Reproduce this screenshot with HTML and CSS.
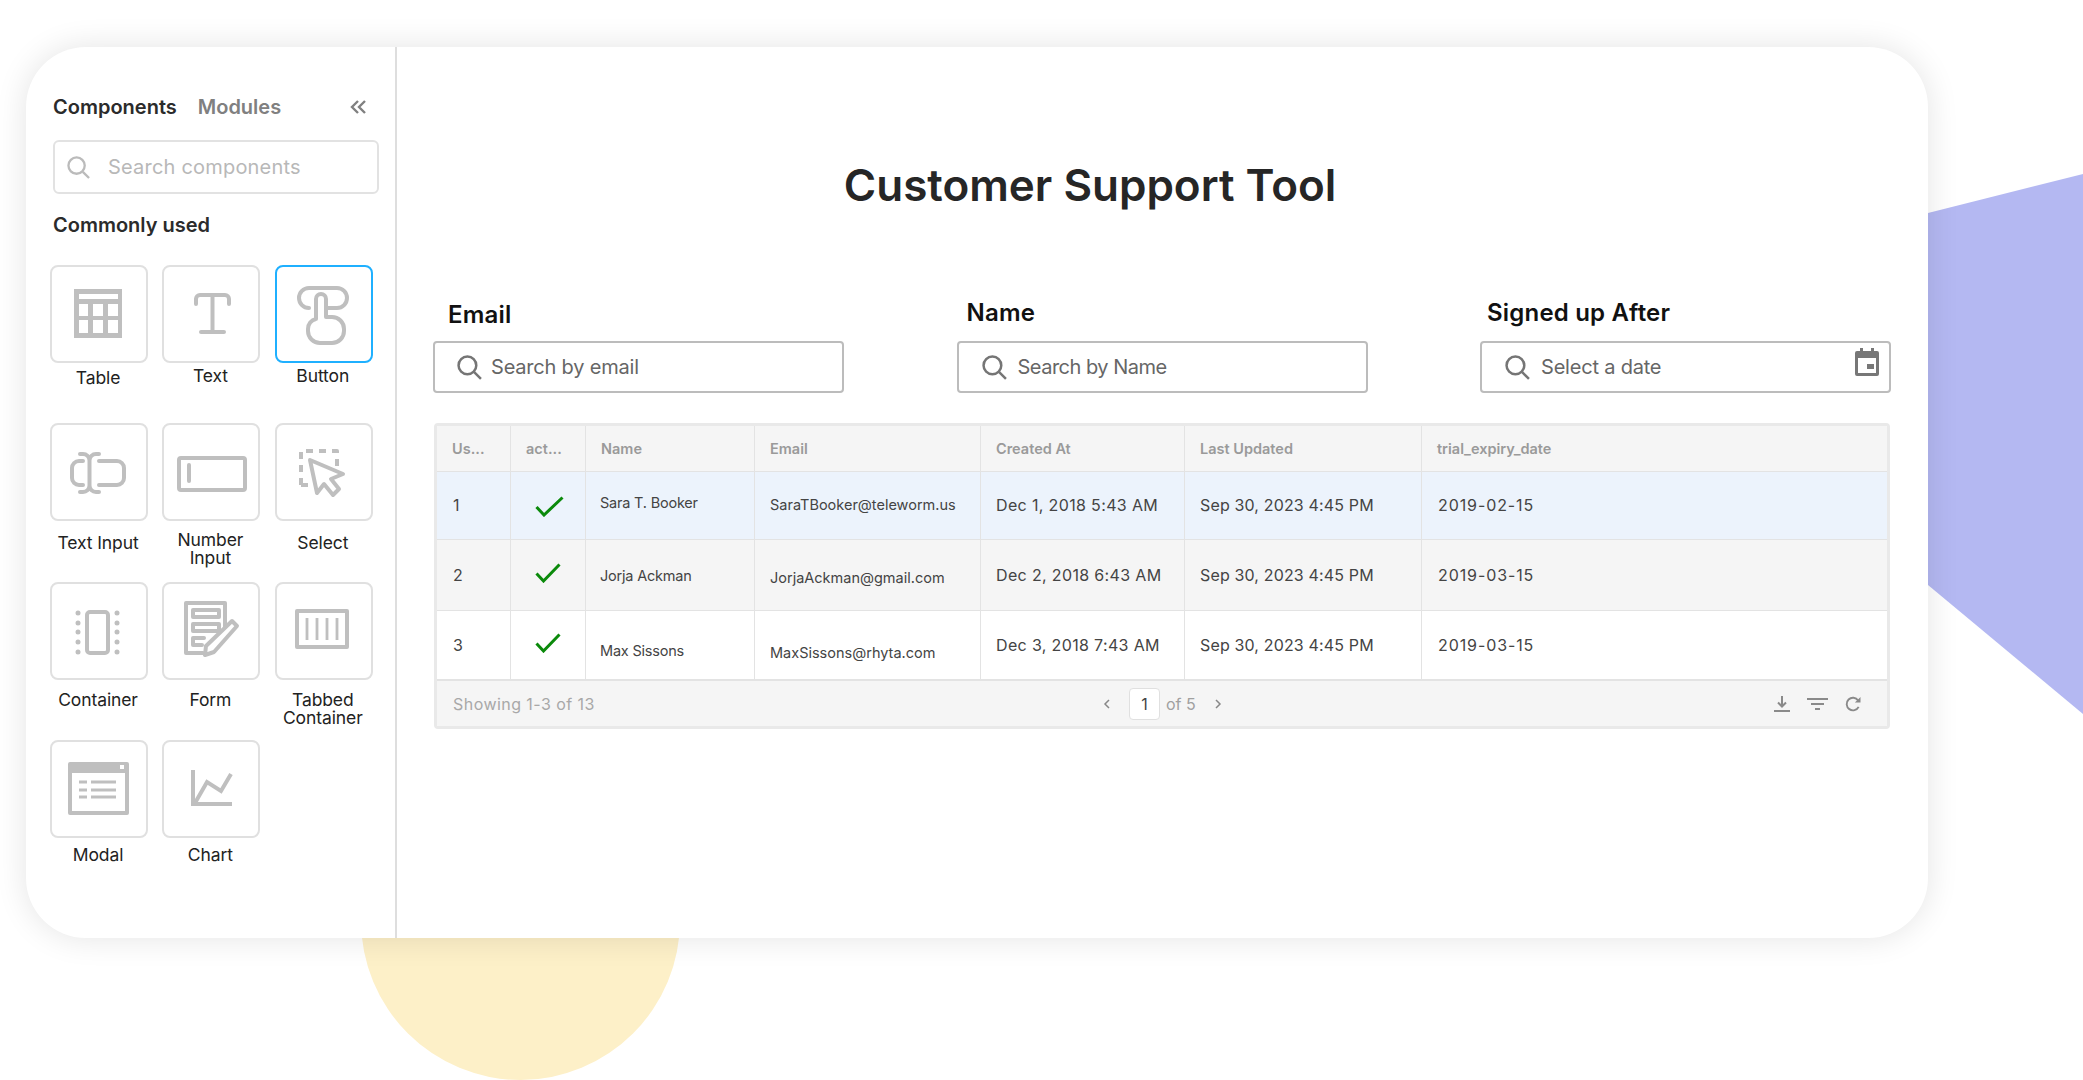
FILE: index.html
```html
<!DOCTYPE html>
<html lang="en">
<head>
    <meta charset="UTF-8">
    <title>Customer Support Tool</title>
    <link rel="stylesheet" href="styles.css">
</head>
<body>
    <div class="page">
        <svg class="deco-wedge" viewBox="0 0 155 540"><polygon points="0,39 155,0 155,540 0,411"/></svg>
        <div class="deco-circle"></div>

        <div class="card">
            <aside class="sidebar">
                <div class="tabs">
                    <span class="tab active">Components</span>
                    <span class="tab">Modules</span>
                    <svg class="collapse" viewBox="0 0 17 14"><path d="M8 1 2 7l6 6M15 1 9 7l6 6"/></svg>
                </div>

                <div class="side-search">
                    <svg class="search-icon" viewBox="0 0 24 24"><circle cx="10" cy="10" r="8.500"/><path d="M16.500 16.500 23 23"/></svg>
                    <span>Search components</span>
                </div>

                <h3 class="side-title">Commonly used</h3>

                <div class="palette">
                    <div class="item">
                        <div class="tile">
                            <svg viewBox="0 0 98 98">
                                <rect class="solid" x="24" y="24" width="48" height="49"/>
                                <g class="hole">
                                    <rect x="29" y="29" width="39" height="5"/>
                                    <rect x="29" y="39" width="9" height="12"/>
                                    <rect x="43" y="39" width="10" height="12"/>
                                    <rect x="58" y="39" width="10" height="12"/>
                                    <rect x="29" y="55" width="9" height="13"/>
                                    <rect x="43" y="55" width="10" height="13"/>
                                    <rect x="58" y="55" width="10" height="13"/>
                                </g>
                            </svg>
                        </div>
                        <div class="item-label low">Table</div>
                    </div>
                    <div class="item">
                        <div class="tile">
                            <svg viewBox="0 0 98 98"><path d="M34 39v-5a4 4 0 0 1 4-4h25a4 4 0 0 1 4 4v5M50.500 30v37M39 67h23"/></svg>
                        </div>
                        <div class="item-label">Text</div>
                    </div>
                    <div class="item">
                        <div class="tile selected">
                            <svg viewBox="0 0 98 98">
                                <path d="M35 43a10 10 0 0 1 0-20h28a10 10 0 0 1 0 20H52"/>
                                <path d="M42 54V34a5 5 0 0 1 10 0v18h6a12 12 0 0 1 12 12v2a12 12 0 0 1-12 12H46a12 12 0 0 1-12-12v-2a10 10 0 0 1 8-10"/>
                            </svg>
                        </div>
                        <div class="item-label">Button</div>
                    </div>

                    <div class="item">
                        <div class="tile">
                            <svg viewBox="0 0 98 98">
                                <path d="M33 38h-4a7 7 0 0 0-7 7v10a7 7 0 0 0 7 7h4M49 38h18a7 7 0 0 1 7 7v10a7 7 0 0 1-7 7H49"/>
                                <path d="M30 31h3a6.500 6.500 0 0 1 6.500 6.500v25A6.500 6.500 0 0 1 33 69h-3M49 31h-3a6.500 6.500 0 0 0-6.500 6.500v25A6.500 6.500 0 0 0 46 69h3"/>
                            </svg>
                        </div>
                        <div class="item-label">Text Input</div>
                    </div>
                    <div class="item">
                        <div class="tile">
                            <svg viewBox="0 0 98 98"><rect x="17" y="35" width="66" height="32" rx="2"/><path d="M27 42v16"/></svg>
                        </div>
                        <div class="item-label tall">Number Input</div>
                    </div>
                    <div class="item">
                        <div class="tile">
                            <svg viewBox="0 0 98 98">
                                <path class="dashes" d="M27 62V28h36v18M27 62h9"/>
                                <path class="cursor" d="M36 37 69 51 57 56 65 66 59 72 50 61 43 70Z"/>
                            </svg>
                        </div>
                        <div class="item-label">Select</div>
                    </div>

                    <div class="item">
                        <div class="tile">
                            <svg viewBox="0 0 98 98">
                                <rect x="37" y="31" width="21" height="41" rx="3"/>
                                <g class="dots">
                                    <circle cx="28" cy="32" r="2.500"/><circle cx="28" cy="42" r="2.500"/><circle cx="28" cy="51" r="2.500"/><circle cx="28" cy="61" r="2.500"/><circle cx="28" cy="71" r="2.500"/>
                                    <circle cx="67" cy="32" r="2.500"/><circle cx="67" cy="42" r="2.500"/><circle cx="67" cy="51" r="2.500"/><circle cx="67" cy="61" r="2.500"/><circle cx="67" cy="71" r="2.500"/>
                                </g>
                            </svg>
                        </div>
                        <div class="item-label">Container</div>
                    </div>
                    <div class="item">
                        <div class="tile">
                            <svg viewBox="0 0 98 98">
                                <path d="M63 46V22H24v50h17"/>
                                <rect x="31" y="29" width="26" height="7"/>
                                <path d="M31 43h26v7H31zM42 57H31v7h9"/>
                                <path d="M70 40 75 45 52 71 43 74 44 65Z"/>
                            </svg>
                        </div>
                        <div class="item-label">Form</div>
                    </div>
                    <div class="item">
                        <div class="tile">
                            <svg viewBox="0 0 98 98"><rect x="23" y="30" width="50" height="36"/><path class="thin" d="M33 37v22M43 37v22M53 37v22M63 37v22"/></svg>
                        </div>
                        <div class="item-label">Tabbed Container</div>
                    </div>

                    <div class="item">
                        <div class="tile">
                            <svg viewBox="0 0 98 98">
                                <rect x="20" y="24" width="57" height="49"/>
                                <rect class="solid" x="19" y="23" width="59" height="10"/>
                                <rect class="hole" x="70" y="25" width="4" height="4"/>
                                <path class="thin" d="M29 42h8M41 42h25M29 50h8M41 50h25M29 57h8M41 57h25"/>
                            </svg>
                        </div>
                        <div class="item-label">Modal</div>
                    </div>
                    <div class="item">
                        <div class="tile">
                            <svg viewBox="0 0 98 98"><path class="square" d="M31 30v34h39M33 63 45 42 59 51 69 34"/></svg>
                        </div>
                        <div class="item-label">Chart</div>
                    </div>
                </div>
            </aside>

            <main class="main">
                <h1 class="title">Customer Support Tool</h1>

                <div class="filters">
                    <div class="field field-email">
                        <label>Email</label>
                        <div class="input">
                            <svg class="search-icon" viewBox="0 0 24 24"><circle cx="10" cy="10" r="8.500"/><path d="M16.500 16.500 23 23"/></svg>
                            <span>Search by email</span>
                        </div>
                    </div>
                    <div class="field field-name">
                        <label>Name</label>
                        <div class="input">
                            <svg class="search-icon" viewBox="0 0 24 24"><circle cx="10" cy="10" r="8.500"/><path d="M16.500 16.500 23 23"/></svg>
                            <span>Search by Name</span>
                        </div>
                    </div>
                    <div class="field field-date">
                        <label>Signed up After</label>
                        <div class="input">
                            <svg class="search-icon" viewBox="0 0 24 24"><circle cx="10" cy="10" r="8.500"/><path d="M16.500 16.500 23 23"/></svg>
                            <span>Select a date</span>
                            <svg class="calendar" viewBox="0 0 24 28">
                                <path d="M5 0h3v4H5zM16 0h3v4h-3z"/>
                                <path fill-rule="evenodd" d="M2 3h20a2 2 0 0 1 2 2v21a2 2 0 0 1-2 2H2a2 2 0 0 1-2-2V5a2 2 0 0 1 2-2Zm1 7v15h18V10Z"/>
                                <path d="M12 16h7v5h-7z"/>
                            </svg>
                        </div>
                    </div>
                </div>

                <div class="table-wrap">
                    <table class="users">
                        <colgroup>
                            <col class="c-id"><col class="c-act"><col class="c-name"><col class="c-email"><col class="c-created"><col class="c-updated"><col class="c-trial">
                        </colgroup>
                        <thead>
                            <tr>
                                <th>Us...</th>
                                <th class="th-act">act...</th>
                                <th>Name</th>
                                <th>Email</th>
                                <th>Created At</th>
                                <th>Last Updated</th>
                                <th>trial_expiry_date</th>
                            </tr>
                        </thead>
                        <tbody>
                            <tr class="row-active">
                                <td>1</td>
                                <td class="check-cell"><svg class="check big" viewBox="0 0 29 21"><path d="M1.500 11 9 19 27.500 1.500"/></svg></td>
                                <td class="small person nudge-up">Sara T. Booker</td>
                                <td class="small mail">SaraTBooker@teleworm.us</td>
                                <td class="created">Dec 1, 2018 5:43 AM</td>
                                <td class="updated">Sep 30, 2023 4:45 PM</td>
                                <td class="trial">2019-02-15</td>
                            </tr>
                            <tr class="row-grey">
                                <td>2</td>
                                <td class="check-cell"><svg class="check" viewBox="0 0 26 20"><path d="M1.500 10.500 8.500 18 24.500 1.500"/></svg></td>
                                <td class="small person">Jorja Ackman</td>
                                <td class="small mail nudge-down">JorjaAckman@gmail.com</td>
                                <td class="created">Dec 2, 2018 6:43 AM</td>
                                <td class="updated">Sep 30, 2023 4:45 PM</td>
                                <td class="trial">2019-03-15</td>
                            </tr>
                            <tr class="row-plain">
                                <td>3</td>
                                <td class="check-cell"><svg class="check" viewBox="0 0 26 20"><path d="M1.500 10.500 8.500 18 24.500 1.500"/></svg></td>
                                <td class="small person nudge-far">Max Sissons</td>
                                <td class="small mail nudge-farther">MaxSissons@rhyta.com</td>
                                <td class="created">Dec 3, 2018 7:43 AM</td>
                                <td class="updated">Sep 30, 2023 4:45 PM</td>
                                <td class="trial">2019-03-15</td>
                            </tr>
                        </tbody>
                    </table>

                    <div class="table-foot">
                        <span class="showing">Showing 1-3 of 13</span>
                        <div class="pager">
                            <svg class="chev" viewBox="0 0 8 12"><path d="M6 2 2 6l4 4"/></svg>
                            <span class="page-box">1</span>
                            <span class="page-of">of 5</span>
                            <svg class="chev next" viewBox="0 0 8 12"><path d="M2 2l4 4-4 4"/></svg>
                        </div>
                        <div class="tools">
                            <svg class="tool" viewBox="0 0 16 16"><path d="M8 0v10M4 6.500 8 10.500l4-4M0 15h16"/></svg>
                            <svg class="tool wide" viewBox="0 0 21 14"><path d="M0 2h21M4 7h13M8 12h5"/></svg>
                            <svg class="tool" viewBox="0 0 17 16"><path d="M14.500 11A6.700 6.700 0 1 1 14 4.200"/><path class="fill" d="M16.500 0.500v6h-6Z"/></svg>
                        </div>
                    </div>
                </div>
            </main>
        </div>
    </div>
</body>
</html>
```

FILE: styles.css
```css
* {
    margin: 0;
    padding: 0;
    box-sizing: border-box;
}

body {
    background-color: white;
    font-family: Inter, "Noto Sans", sans-serif;
}

.page {
    position: relative;
    width: 2083px;
    height: 1080px;
    padding: 47px 0 0 26px;
    overflow: hidden;
}

/* Background shapes behind the card */
.deco-wedge {
    position: absolute;
    left: 1928px;
    top: 174px;
    width: 155px;
    height: 540px;
}

.deco-wedge polygon {
    fill: #b4b8f2;
}

.deco-circle {
    position: absolute;
    left: 361px;
    top: 761px;
    width: 319px;
    height: 319px;
    border-radius: 50%;
    background-color: #fdf0c8;
}

.card {
    position: relative;
    display: flex;
    width: 1902px;
    height: 891px;
    background-color: white;
    border-radius: 60px;
    box-shadow: 0 0 32px rgba(0, 0, 0, 0.11);
}

/* Sidebar */
.sidebar {
    width: 371px;
    flex-shrink: 0;
    padding: 47px 16px 0 27px;
    border-right: 2px solid #dedede;
}

.tabs {
    display: flex;
    align-items: center;
    gap: 21px;
    height: 26px;
}

.tab {
    font-size: 20px;
    font-weight: 600;
    color: #808080;
}

.tab.active {
    color: #2b2b2b;
}

.collapse {
    width: 17px;
    height: 14px;
    margin-left: auto;
    margin-right: 12px;
    fill: none;
    stroke: #808080;
    stroke-width: 2.400;
}

.side-search {
    display: flex;
    align-items: center;
    gap: 18px;
    height: 54px;
    margin-top: 20px;
    padding-left: 12px;
    border: 2.500px solid #e2e2e2;
    border-radius: 6px;
    font-size: 20px;
    letter-spacing: 0.2px;
    color: #b8b8b8;
}

.search-icon {
    width: 23px;
    height: 23px;
    flex-shrink: 0;
    fill: none;
    stroke: #bbbbbb;
    stroke-width: 2.400;
}

.side-title {
    margin-top: 18px;
    font-size: 20px;
    line-height: 26px;
    font-weight: 600;
    color: #2b2b2b;
}

.palette {
    display: grid;
    grid-template-columns: repeat(3, 98px);
    grid-auto-rows: 158.400px;
    column-gap: 14.400px;
    margin: 27px 0 0 -3px;
}

.tile {
    width: 98px;
    height: 98px;
    border: 2.500px solid #e0e0e0;
    border-radius: 8px;
}

.tile.selected {
    border-color: #1fb0ff;
}

.tile svg {
    display: block;
    width: 98px;
    height: 98px;
    margin: -2.500px;
    fill: none;
    stroke: #bfbfbf;
    stroke-width: 4;
    stroke-linecap: round;
    stroke-linejoin: round;
}

.tile .solid {
    fill: #bfbfbf;
    stroke: none;
}

.tile .hole,
.tile .hole rect {
    fill: white;
    stroke: none;
}

.tile .dots {
    fill: #bfbfbf;
    stroke: none;
}

.tile .thin {
    stroke-width: 2.800;
    stroke-linecap: butt;
}

.tile .square {
    stroke-linecap: butt;
    stroke-linejoin: miter;
}

.tile .dashes {
    stroke-dasharray: 7 6;
    stroke-linecap: butt;
}

.tile .cursor {
    fill: white;
}

.item-label {
    width: 96px;
    margin-top: 4px;
    font-size: 17.500px;
    line-height: 18px;
    letter-spacing: -0.1px;
    text-align: center;
    color: #222222;
}

.item-label.low {
    margin-top: 6px;
}

.item:nth-child(n+4) .item-label {
    margin-top: 13px;
}

.item:nth-child(n+4) .item-label.tall {
    margin-top: 10px;
}

.item:nth-child(n+7) .item-label {
    margin-top: 11px;
}

.item:nth-child(n+10) .item-label {
    margin-top: 8px;
}

/* Main area */
.main {
    flex: 1;
    padding: 111px 37px 0;
}

.title {
    padding-right: 145px;
    font-size: 44px;
    line-height: 54px;
    font-weight: 600;
    text-align: center;
    color: #262626;
}

.filters {
    display: flex;
    align-items: flex-end;
    gap: 112.500px;
    margin: 86px 0 0 -1px;
}

.field {
    width: 411px;
    flex-shrink: 0;
}

.field label {
    display: block;
    font-size: 24px;
    line-height: 30px;
    font-weight: 600;
    letter-spacing: 0.2px;
    color: #111111;
}

.field-email label {
    padding-left: 15px;
    margin-bottom: 11px;
}

.field-name label {
    padding-left: 10px;
    margin-bottom: 13px;
}

.field-date label {
    padding-left: 7px;
    margin-bottom: 13px;
}

.input {
    display: flex;
    align-items: center;
    gap: 9px;
    height: 52px;
    padding-left: 22px;
    border: 2.500px solid #bcbcbc;
    border-radius: 4px;
    font-size: 20px;
    letter-spacing: -0.2px;
    color: #666666;
}

.field-name .input {
    gap: 11px;
    padding-left: 23px;
    letter-spacing: -0.5px;
}

.field-date .input {
    gap: 11px;
    padding-left: 23px;
}

.input .search-icon {
    width: 25px;
    height: 25px;
    stroke: #757575;
}

.calendar {
    width: 24px;
    height: 28px;
    margin: -10px 10px 0 auto;
    fill: #777777;
}

/* Table */
.table-wrap {
    width: 1456px;
    margin-top: 30px;
    border: 3px solid #e9e9e9;
    border-radius: 4px;
    overflow: hidden;
}

.users {
    width: 1450px;
    table-layout: fixed;
    border-collapse: separate;
    border-spacing: 0;
}

.c-id { width: 74px; }
.c-act { width: 75px; }
.c-name { width: 169px; }
.c-email { width: 226px; }
.c-created { width: 204px; }
.c-updated { width: 237px; }
.c-trial { width: 465px; }

.users th,
.users td {
    padding-left: 16px;
    text-align: left;
    border-right: 1px solid #e3e3e3;
    border-bottom: 1px solid #e3e3e3;
}

.users th:last-child,
.users td:last-child {
    border-right: none;
}

.users th {
    height: 46px;
    padding-left: 15px;
    font-size: 14.500px;
    font-weight: 600;
    color: #9a9a9a;
    background-color: #f5f5f5;
}

.users td {
    font-size: 16px;
    color: #444444;
}

.users td.small {
    font-size: 14.500px;
}

.users td.person {
    padding-left: 14px;
    letter-spacing: -0.2px;
}

.users td.mail {
    padding-left: 15px;
}

.users td.created {
    padding-left: 15px;
    letter-spacing: 0.35px;
}

.users td.updated {
    padding-left: 15px;
    letter-spacing: 0.15px;
}

.users td.trial {
    letter-spacing: 0.9px;
}

.users td.nudge-up {
    padding-bottom: 6px;
}

.users td.nudge-down {
    padding-top: 5px;
}

.users td.nudge-far {
    padding-top: 10px;
}

.users td.nudge-farther {
    padding-top: 14px;
}

.users td.check-cell {
    padding-left: 24px;
}

.row-active td {
    height: 68px;
    padding-bottom: 2px;
    background-color: #ecf3fc;
}

.row-grey td {
    height: 71px;
    background-color: #f5f5f5;
}

.row-plain td {
    height: 69px;
    background-color: white;
}

.check {
    display: block;
    width: 26px;
    height: 20px;
    margin-top: -5px;
    fill: none;
    stroke: #0b8a0b;
    stroke-width: 3;
}

.check.big {
    width: 29px;
    height: 21px;
    margin-top: 4px;
}

.table-foot {
    display: grid;
    grid-template-columns: 666px auto 1fr;
    align-items: center;
    height: 46px;
    background-color: #f5f5f5;
    border-top: 1px solid #e3e3e3;
}

.showing {
    padding-left: 16px;
    font-size: 16px;
    letter-spacing: 0.45px;
    color: #a8a8a8;
}

.pager {
    display: flex;
    align-items: center;
    font-size: 16px;
    color: #a0a0a0;
}

.chev {
    width: 8px;
    height: 12px;
    fill: none;
    stroke: #888888;
    stroke-width: 1.500;
}

.chev.next {
    margin-left: 18px;
}

.page-box {
    display: flex;
    align-items: center;
    justify-content: center;
    width: 31px;
    height: 32px;
    margin-left: 18px;
    background-color: white;
    border: 1px solid #e0e0e0;
    border-radius: 4px;
    color: #444444;
}

.page-of {
    margin-left: 6px;
}

.tools {
    display: flex;
    justify-content: flex-end;
    align-items: center;
    gap: 17px;
    padding-right: 26px;
}

.tool {
    width: 16px;
    height: 16px;
    fill: none;
    stroke: #8a8a8a;
    stroke-width: 2;
}

.tool.wide {
    width: 21px;
    height: 14px;
}

.tool .fill {
    fill: #8a8a8a;
    stroke: none;
}
```
